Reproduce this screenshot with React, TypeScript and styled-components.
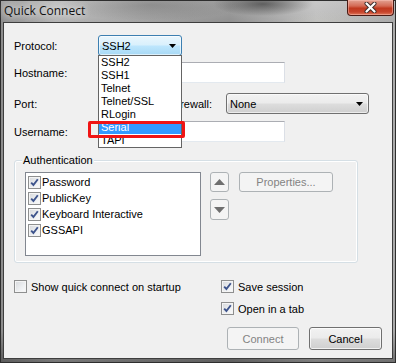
import styled, { createGlobalStyle } from 'styled-components'

const GlobalStyle = createGlobalStyle`
  html, body {
    margin: 0;
    padding: 0;
  }
  body {
    width: 396px;
    height: 363px;
    overflow: hidden;
    font-family: "Liberation Sans", Arial, sans-serif;
    font-size: 11px;
    color: #000;
  }
`

const Window = styled.div`
  box-sizing: border-box;
  width: 396px;
  height: 363px;
  display: flex;
  flex-direction: column;
  border: 1px solid #2e2e2e;
  padding: 0 2px 3px;
  background:
    radial-gradient(ellipse 50px 12px at 262px 3px, rgba(30, 30, 30, 0.55), transparent),
    radial-gradient(ellipse 90px 16px at 150px 4px, rgba(70, 70, 70, 0.3), transparent),
    radial-gradient(ellipse 70px 30px at 330px 40px, rgba(220, 220, 200, 0.35), transparent),
    linear-gradient(180deg, rgba(255, 255, 255, 0.18), rgba(0, 0, 0, 0) 22px, rgba(0, 0, 0, 0) 330px, rgba(0, 0, 0, 0.35)),
    linear-gradient(90deg, #8c8c8c 0%, #b4b4b4 14%, #a3a3a3 34%, #8f8f8f 58%, #bdbdbd 80%, #a9a9a9 100%);
`

const TitleBar = styled.div`
  height: 21px;
  display: flex;
  align-items: flex-start;
`

const Title = styled.div`
  margin: 2px 0 0 1px;
  font-family: "Open Sans", "Liberation Sans", sans-serif;
  font-size: 12px;
  line-height: 16px;
  color: #111;
  text-shadow: 0 0 6px rgba(255, 255, 255, 0.9), 0 0 10px rgba(255, 255, 255, 0.6);
`

const CloseButton = styled.div`
  margin: -1px -1px 0 auto;
  box-sizing: border-box;
  width: 47px;
  height: 16px;
  display: flex;
  align-items: center;
  justify-content: center;
  border: 1px solid #4a1b14;
  border-top: none;
  border-radius: 0 0 4px 4px;
  background: linear-gradient(180deg, #e3a292 0%, #d46a55 40%, #c0391f 55%, #c7442c 80%, #e07a5c 100%);
  box-shadow: inset 0 0 0 1px rgba(255, 200, 190, 0.45);
`

const Client = styled.div`
  flex: 1;
  position: relative;
  border: 1px solid #3e3e3e;
  background: #f0f0f0;
  padding: 0 10px;
  display: flex;
  flex-direction: column;
`

const Row = styled.div<{ $top: number }>`
  margin-top: ${p => p.$top}px;
  height: 21px;
  display: flex;
  align-items: center;
`

const Label = styled.div<{ $width: number; $left?: number }>`
  width: ${p => p.$width}px;
  margin-left: ${p => p.$left ?? 0}px;
  flex-shrink: 0;
`

const Combo = styled.div<{ $width: number; $focused?: boolean }>`
  box-sizing: border-box;
  width: ${p => p.$width}px;
  height: 21px;
  display: flex;
  align-items: center;
  justify-content: space-between;
  padding: 0 5px 0 3px;
  border: 1px solid ${p => (p.$focused ? '#3c7fb1' : '#707070')};
  border-radius: 3px;
  background: ${p =>
    p.$focused
      ? 'linear-gradient(180deg, #eaf6fd 0%, #d9f0fc 48%, #bee6fd 52%, #a7d9f5 100%)'
      : 'linear-gradient(180deg, #f2f2f2 0%, #ebebeb 48%, #dddddd 52%, #cfcfcf 100%)'};
  box-shadow: inset 0 0 0 1px rgba(255, 255, 255, 0.6);
  color: #000;
`

const Input = styled.div<{ $width: number }>`
  box-sizing: border-box;
  width: ${p => p.$width}px;
  height: 21px;
  background: #fff;
  border: 1px solid;
  border-color: #abadb3 #dbdfe6 #e3e9ef #e2e3ea;
`

const Dropdown = styled.div`
  position: absolute;
  left: 94px;
  top: 32px;
  box-sizing: border-box;
  width: 84px;
  border: 1px solid #646464;
  background: #fff;
  z-index: 2;
`

const DropItem = styled.div<{ $active?: boolean }>`
  height: 13px;
  line-height: 13px;
  padding-left: 2px;
  background: ${p => (p.$active ? '#3399ff' : 'transparent')};
  color: ${p => (p.$active ? '#fff' : '#000')};
`

const Marker = styled.div`
  position: absolute;
  left: 84px;
  top: 98px;
  box-sizing: border-box;
  width: 97px;
  height: 17px;
  border: 3px solid #f01414;
  border-radius: 2px;
  z-index: 3;
`

const GroupBox = styled.div`
  position: relative;
  box-sizing: border-box;
  margin-top: 18px;
  width: 344px;
  height: 103px;
  border: 1px solid #d5dfe5;
  border-radius: 3px;
  box-shadow: inset 0 0 0 1px #fff;
  padding: 11px 10px;
  display: flex;
  align-items: flex-start;
`

const GroupLabel = styled.div`
  position: absolute;
  top: -7px;
  left: 7px;
  padding: 0 1px;
  line-height: 13px;
  background: #f0f0f0;
`

const ListBox = styled.div`
  box-sizing: border-box;
  width: 176px;
  height: 84px;
  border: 1px solid #828790;
  background: #fff;
  padding: 1px 0 0 2px;
`

const ListItem = styled.div`
  height: 16px;
  display: flex;
  align-items: center;
  gap: 1px;
`

const ArrowColumn = styled.div`
  margin-left: 9px;
  display: flex;
  flex-direction: column;
  gap: 7px;
`

const Button = styled.div<{ $width: number; $height: number; $disabled?: boolean }>`
  box-sizing: border-box;
  width: ${p => p.$width}px;
  height: ${p => p.$height}px;
  display: flex;
  align-items: center;
  justify-content: center;
  border: 1px solid ${p => (p.$disabled ? '#adb2b5' : '#707070')};
  border-radius: 3px;
  background: ${p =>
    p.$disabled
      ? '#f4f4f4'
      : 'linear-gradient(180deg, #f2f2f2 0%, #ebebeb 48%, #dddddd 52%, #cfcfcf 100%)'};
  box-shadow: ${p => (p.$disabled ? 'none' : 'inset 0 0 0 1px rgba(255, 255, 255, 0.7)')};
  color: ${p => (p.$disabled ? '#838383' : '#000')};
  flex-shrink: 0;
`

const PropertiesButton = styled(Button)`
  margin-left: 10px;
`

const Footer = styled.div`
  margin-top: 17px;
  display: flex;
`

const LeftCol = styled.div`
  width: 207px;
`

const RightCol = styled.div`
  display: flex;
  flex-direction: column;
`

const CheckRow = styled.div<{ $top?: number }>`
  margin-top: ${p => p.$top ?? 0}px;
  height: 13px;
  display: flex;
  align-items: center;
  gap: 4px;
`

const ButtonRow = styled.div`
  margin-top: 12px;
  padding-left: 6px;
  display: flex;
  gap: 10px;
`

const Box = styled.div`
  box-sizing: border-box;
  width: 13px;
  height: 13px;
  flex-shrink: 0;
  border: 1px solid #8e8f8f;
  background: linear-gradient(135deg, #d6d8db 0%, #eef0f2 60%, #fbfbfb 100%);
  box-shadow: inset 0 0 0 1px #f4f4f4;
  display: flex;
  align-items: center;
  justify-content: center;
`

const Check = ({ checked }: { checked?: boolean }) => (
  <Box>
    {checked && (
      <svg width="11" height="11" viewBox="0 0 11 11">
        <path d="M2.2 5.6 L4.4 8 L8.8 2.2" fill="none" stroke="#3e548c" strokeWidth="1.9" />
      </svg>
    )}
  </Box>
)

const ComboArrow = () => (
  <svg width="7" height="4" viewBox="0 0 7 4">
    <path d="M0 0 H7 L3.5 4 Z" fill="#000" />
  </svg>
)

const Triangle = ({ up }: { up?: boolean }) => (
  <svg width="11" height="6" viewBox="0 0 11 6">
    <path d={up ? 'M0 6 H11 L5.5 0 Z' : 'M0 0 H11 L5.5 6 Z'} fill="#6f6f6f" />
  </svg>
)

const protocols = ['SSH2', 'SSH1', 'Telnet', 'Telnet/SSL', 'RLogin', 'Serial', 'TAPI']
const authMethods = ['Password', 'PublicKey', 'Keyboard Interactive', 'GSSAPI']

export default function App() {
  return (
    <>
      <GlobalStyle />
      <Window>
        <TitleBar>
          <Title>Quick Connect</Title>
          <CloseButton>
            <svg width="13" height="11" viewBox="0 0 13 11">
              <path d="M2.5 1.5 L10.5 9.5 M10.5 1.5 L2.5 9.5" stroke="#3a2a28" strokeWidth="4" strokeLinecap="round" />
              <path d="M2.5 1.5 L10.5 9.5 M10.5 1.5 L2.5 9.5" stroke="#fff" strokeWidth="2.2" strokeLinecap="round" />
            </svg>
          </CloseButton>
        </TitleBar>
        <Client>
          <Row $top={12}>
            <Label $width={84}>Protocol:</Label>
            <Combo $width={84} $focused>
              <span>SSH2</span>
              <ComboArrow />
            </Combo>
          </Row>
          <Row $top={6}>
            <Label $width={84}>Hostname:</Label>
            <Input $width={187} />
          </Row>
          <Row $top={10}>
            <Label $width={84}>Port:</Label>
            <Input $width={62} />
            <Label $width={55} $left={11}>Firewall:</Label>
            <Combo $width={143}>
              <span>None</span>
              <ComboArrow />
            </Combo>
          </Row>
          <Row $top={7}>
            <Label $width={84}>Username:</Label>
            <Input $width={187} />
          </Row>

          <GroupBox>
            <GroupLabel>Authentication</GroupLabel>
            <ListBox>
              {authMethods.map(m => (
                <ListItem key={m}>
                  <Check checked />
                  <span>{m}</span>
                </ListItem>
              ))}
            </ListBox>
            <ArrowColumn>
              <Button $width={19} $height={20} $disabled>
                <Triangle up />
              </Button>
              <Button $width={19} $height={21} $disabled>
                <Triangle />
              </Button>
            </ArrowColumn>
            <PropertiesButton $width={94} $height={20} $disabled>
              Properties...
            </PropertiesButton>
          </GroupBox>

          <Footer>
            <LeftCol>
              <CheckRow>
                <Check />
                <span>Show quick connect on startup</span>
              </CheckRow>
            </LeftCol>
            <RightCol>
              <CheckRow>
                <Check checked />
                <span>Save session</span>
              </CheckRow>
              <CheckRow $top={9}>
                <Check checked />
                <span>Open in a tab</span>
              </CheckRow>
              <ButtonRow>
                <Button $width={72} $height={23} $disabled>
                  Connect
                </Button>
                <Button $width={73} $height={23}>
                  Cancel
                </Button>
              </ButtonRow>
            </RightCol>
          </Footer>

          <Dropdown>
            {protocols.map(p => (
              <DropItem key={p} $active={p === 'Serial'}>
                {p}
              </DropItem>
            ))}
          </Dropdown>
          <Marker />
        </Client>
      </Window>
    </>
  )
}
